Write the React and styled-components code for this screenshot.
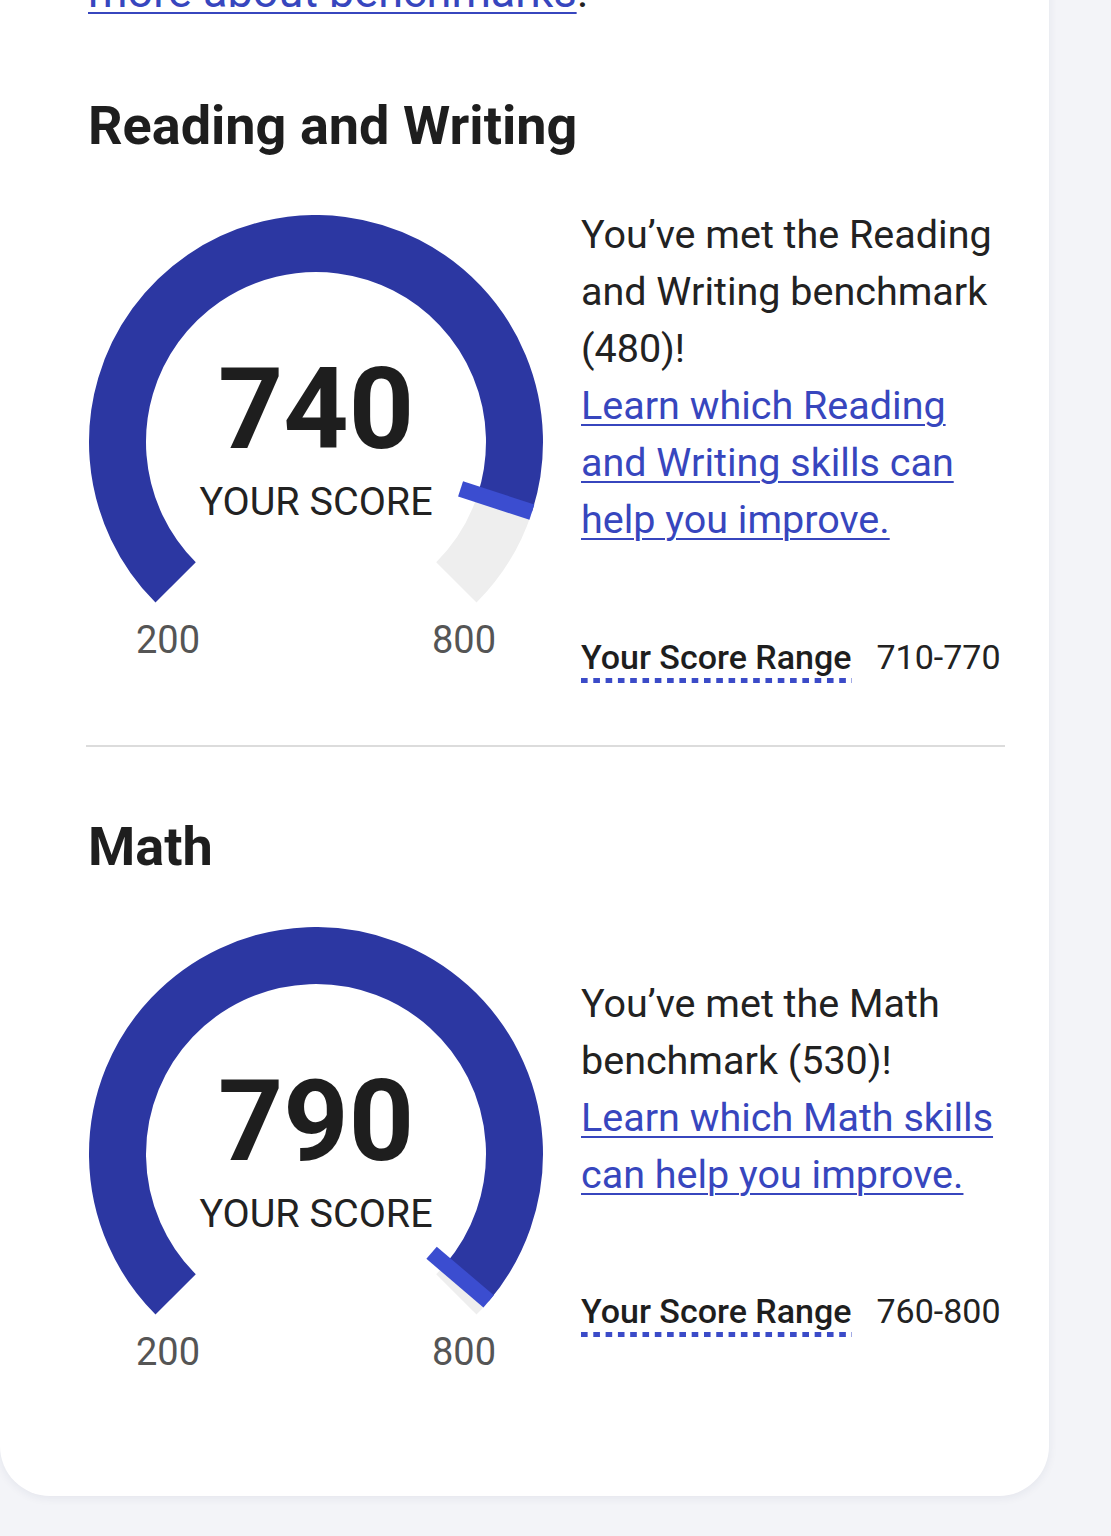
import React from 'react'
import styled, { createGlobalStyle } from 'styled-components'

const GlobalStyle = createGlobalStyle`
  html, body {
    margin: 0;
    padding: 0;
    background: #f3f4f8;
  }
  body {
    font-family: Roboto, "Liberation Sans", Arial, sans-serif;
    color: #222;
  }
`

const Page = styled.div`
  height: 1536px;
  overflow: hidden;
`

const Card = styled.div`
  width: 1049px;
  box-sizing: border-box;
  margin-top: -120px;
  padding: 82.5px 44px 110.5px 88px;
  background: #fff;
  border-radius: 50px;
  box-shadow: 0 2px 10px rgba(30, 40, 90, 0.07);
`

const Intro = styled.p`
  margin: 0;
  font-size: 45px;
  line-height: 57px;
  color: #222;
`

const Link = styled.a`
  color: #3746be;
  text-decoration: underline;
  text-decoration-thickness: 2px;
  text-underline-offset: 5px;
  cursor: pointer;
`

const Section = styled.section`
  padding-top: ${p => p.$top}px;
  padding-bottom: ${p => p.$bottom || 0}px;
`

const Heading = styled.h2`
  margin: 0 0 49px;
  font-size: 54px;
  line-height: 62px;
  font-weight: 700;
  color: #1e1e1e;
`

const Divider = styled.hr`
  margin: 0 0 0 -2px;
  border: 0;
  height: 2px;
  background: #dcdcdc;
`

const Row = styled.div`
  display: flex;
  align-items: center;
  gap: 37px;
`

const GaugeBox = styled.div`
  position: relative;
  width: 456px;
  flex: none;
`

const GaugeSvg = styled.svg`
  display: block;
`

const ScoreOverlay = styled.div`
  position: absolute;
  top: 137px;
  left: 0;
  right: 0;
  text-align: center;
`

const ScoreNum = styled.div`
  font-size: 114px;
  line-height: 114px;
  font-weight: 700;
  color: #1e1e1e;
`

const ScoreCaption = styled.div`
  margin-top: 17px;
  font-size: 39.5px;
  line-height: 38px;
  color: #222;
`

const Limits = styled.div`
  display: flex;
  justify-content: space-between;
  padding: 0 30px;
  height: 66px;
  font-size: 38px;
  line-height: 66px;
  color: #555;
`

const Limit = styled.span`
  width: 100px;
  text-align: center;
`

const Info = styled.div`
  flex: 1;
  min-width: 0;
  font-size: 39.5px;
  line-height: 57px;
`

const Para = styled.p`
  margin: 0;
`

const RangeRow = styled.div`
  display: flex;
  align-items: flex-start;
  margin-top: 88.5px;
  font-size: 34px;
  line-height: 40px;
`

const RangeLabel = styled.span`
  font-weight: 500;
  color: #1e1e1e;
  padding-bottom: 6px;
  background-image: linear-gradient(to right, #3b4bc8 0 6.5px, transparent 6.5px);
  background-size: 12.3px 5px;
  background-repeat: repeat-x;
  background-position: left bottom;
`

const RangeValue = styled.span`
  margin-left: 25px;
  color: #222;
`

const CX = 228
const CY = 227
const R = 198.5
const STROKE = 57

const angleFor = score => -135 + (270 * (score - 200)) / 600

const pt = (deg, r) => {
  const a = (deg * Math.PI) / 180
  return [CX + r * Math.sin(a), CY - r * Math.cos(a)]
}

const arc = (from, to) => {
  const [x1, y1] = pt(from, R)
  const [x2, y2] = pt(to, R)
  const large = to - from > 180 ? 1 : 0
  return `M ${x1} ${y1} A ${R} ${R} 0 ${large} 1 ${x2} ${y2}`
}

function Gauge({ score }) {
  const a = angleFor(score)
  const rad = (a * Math.PI) / 180
  const tx = Math.cos(rad) * 8
  const ty = Math.sin(rad) * 8
  const [ix, iy] = pt(a, 152)
  const [ox, oy] = pt(a, 227)
  const marker = [
    [ix - tx, iy - ty],
    [ox - tx, oy - ty],
    [ox + tx, oy + ty],
    [ix + tx, iy + ty],
  ]
    .map(p => p.join(','))
    .join(' ')

  return (
    <GaugeBox>
      <GaugeSvg width="456" height="392" viewBox="0 0 456 392">
        <path d={arc(a, 135)} fill="none" stroke="#eeeeee" strokeWidth={STROKE} />
        <path d={arc(-135, a)} fill="none" stroke="#2c37a2" strokeWidth={STROKE} />
        <polygon points={marker} fill="#3b4dd0" />
      </GaugeSvg>
      <ScoreOverlay>
        <ScoreNum>{score}</ScoreNum>
        <ScoreCaption>YOUR SCORE</ScoreCaption>
      </ScoreOverlay>
      <Limits>
        <Limit>200</Limit>
        <Limit>800</Limit>
      </Limits>
    </GaugeBox>
  )
}

function ScoreSection({ title, score, message, link, range, top, bottom }) {
  return (
    <Section $top={top} $bottom={bottom}>
      <Heading>{title}</Heading>
      <Row>
        <Gauge score={score} />
        <Info>
          <Para>{message}</Para>
          <Para>
            <Link>{link}</Link>
          </Para>
          <RangeRow>
            <RangeLabel>Your Score Range</RangeLabel>
            <RangeValue>{range}</RangeValue>
          </RangeRow>
        </Info>
      </Row>
    </Section>
  )
}

export default function App() {
  return (
    <Page>
      <GlobalStyle />
      <Card>
        <Intro>
          <Link>more about benchmarks</Link>.
        </Intro>
        <ScoreSection
          title="Reading and Writing"
          score={740}
          message="You’ve met the Reading and Writing benchmark (480)!"
          link="Learn which Reading and Writing skills can help you improve."
          range="710-770"
          top={75.5}
          bottom={62}
        />
        <Divider />
        <ScoreSection
          title="Math"
          score={790}
          message="You’ve met the Math benchmark (530)!"
          link="Learn which Math skills can help you improve."
          range="760-800"
          top={69.5}
        />
      </Card>
    </Page>
  )
}
